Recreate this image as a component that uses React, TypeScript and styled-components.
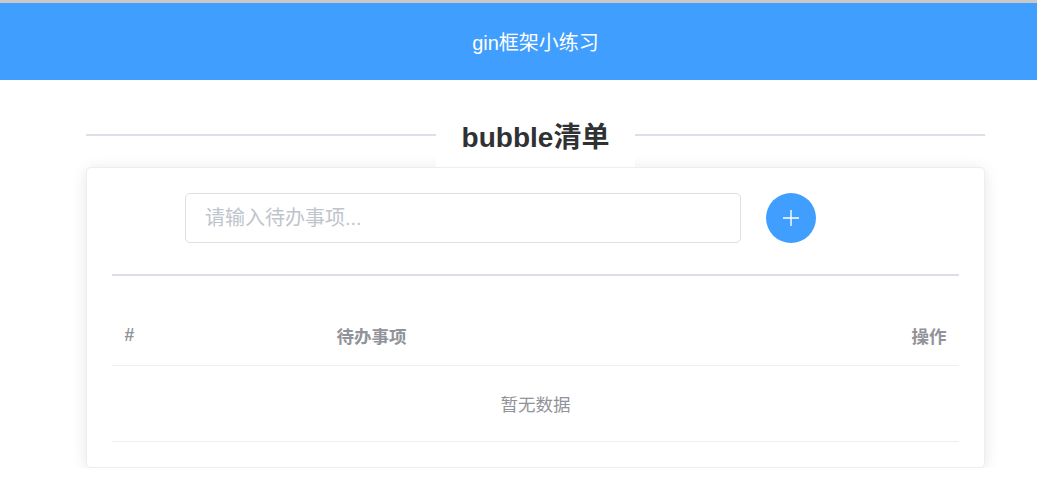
import React from 'react';
import styled, { createGlobalStyle } from 'styled-components';

const GlobalStyle = createGlobalStyle`
  body {
    margin: 0;
    background: #fff;
    font-family: "Helvetica Neue", "Liberation Sans", "Noto Sans CJK SC", sans-serif;
  }
`;

const TopBar = styled.header`
  border-top: 3px solid #c8c8c8;
  background: #409eff;
  height: 77px;
`;

const Wrap = styled.div`
  width: 899px;
  margin-left: 86px;
`;

const HeaderInner = styled(Wrap)`
  height: 100%;
  display: flex;
  align-items: center;
  justify-content: center;
  color: #fff;
  font-size: 20px;
`;

const TitleRow = styled.div`
  display: flex;
  align-items: center;
  margin-top: 23px;
  height: 64px;
`;

const Line = styled.div`
  flex: 1;
  height: 2px;
  background: #dcdfe6;
`;

const Title = styled.h2`
  position: relative;
  z-index: 1;
  margin: 0;
  height: 64px;
  display: flex;
  align-items: center;
  padding: 0 26px;
  background: #fff;
  color: #303133;
  font-size: 28px;
  font-weight: 700;
`;

const Card = styled.div`
  border: 1px solid #ebeef5;
  border-radius: 5px;
  background: #fff;
  box-shadow: 0 2px 15px 0 rgba(0, 0, 0, 0.1);
  padding: 25px;
`;

const InputRow = styled.div`
  display: flex;
  align-items: center;
  gap: 25px;
  padding-left: 73px;
`;

const TextInput = styled.input`
  box-sizing: border-box;
  width: 556px;
  height: 50px;
  border: 1px solid #dcdfe6;
  border-radius: 5px;
  padding: 0 19px;
  font-family: inherit;
  font-size: 20px;
  color: #606266;
  outline: none;
  &::placeholder {
    color: #c0c4cc;
  }
`;

const RoundButton = styled.button`
  width: 50px;
  height: 50px;
  border-radius: 50%;
  border: none;
  background: #409eff;
  display: flex;
  align-items: center;
  justify-content: center;
  padding: 0;
  cursor: pointer;
`;

const Divider = styled.div`
  height: 2px;
  background: #dcdfe6;
  margin: 31px 0 30px;
`;

const Row = styled.div<{ $head?: boolean }>`
  display: grid;
  grid-template-columns: 212px 1fr auto;
  align-items: center;
  height: ${(p) => (p.$head ? '59px' : '75px')};
  border-bottom: 1px solid #ebeef5;
  font-size: 17.5px;
  color: #909399;
  font-weight: ${(p) => (p.$head ? 700 : 400)};
`;

const Cell = styled.div<{ $align?: string }>`
  padding: 0 12.5px;
  text-align: ${(p) => p.$align || 'left'};
`;

const Empty = styled.div`
  grid-column: 1 / -1;
  text-align: center;
`;

const PlusIcon = () => (
  <svg width="18" height="18" viewBox="0 0 18 18">
    <path d="M9 1v16M1 9h16" stroke="#fff" strokeWidth="1.4" />
  </svg>
);

export default function App() {
  return (
    <>
      <GlobalStyle />
      <TopBar>
        <HeaderInner>gin框架小练习</HeaderInner>
      </TopBar>
      <Wrap>
        <TitleRow>
          <Line />
          <Title>bubble清单</Title>
          <Line />
        </TitleRow>
        <Card>
          <InputRow>
            <TextInput placeholder="请输入待办事项..." />
            <RoundButton>
              <PlusIcon />
            </RoundButton>
          </InputRow>
          <Divider />
          <Row $head>
            <Cell>#</Cell>
            <Cell>待办事项</Cell>
            <Cell $align="right">操作</Cell>
          </Row>
          <Row>
            <Empty>暂无数据</Empty>
          </Row>
        </Card>
      </Wrap>
    </>
  );
}
